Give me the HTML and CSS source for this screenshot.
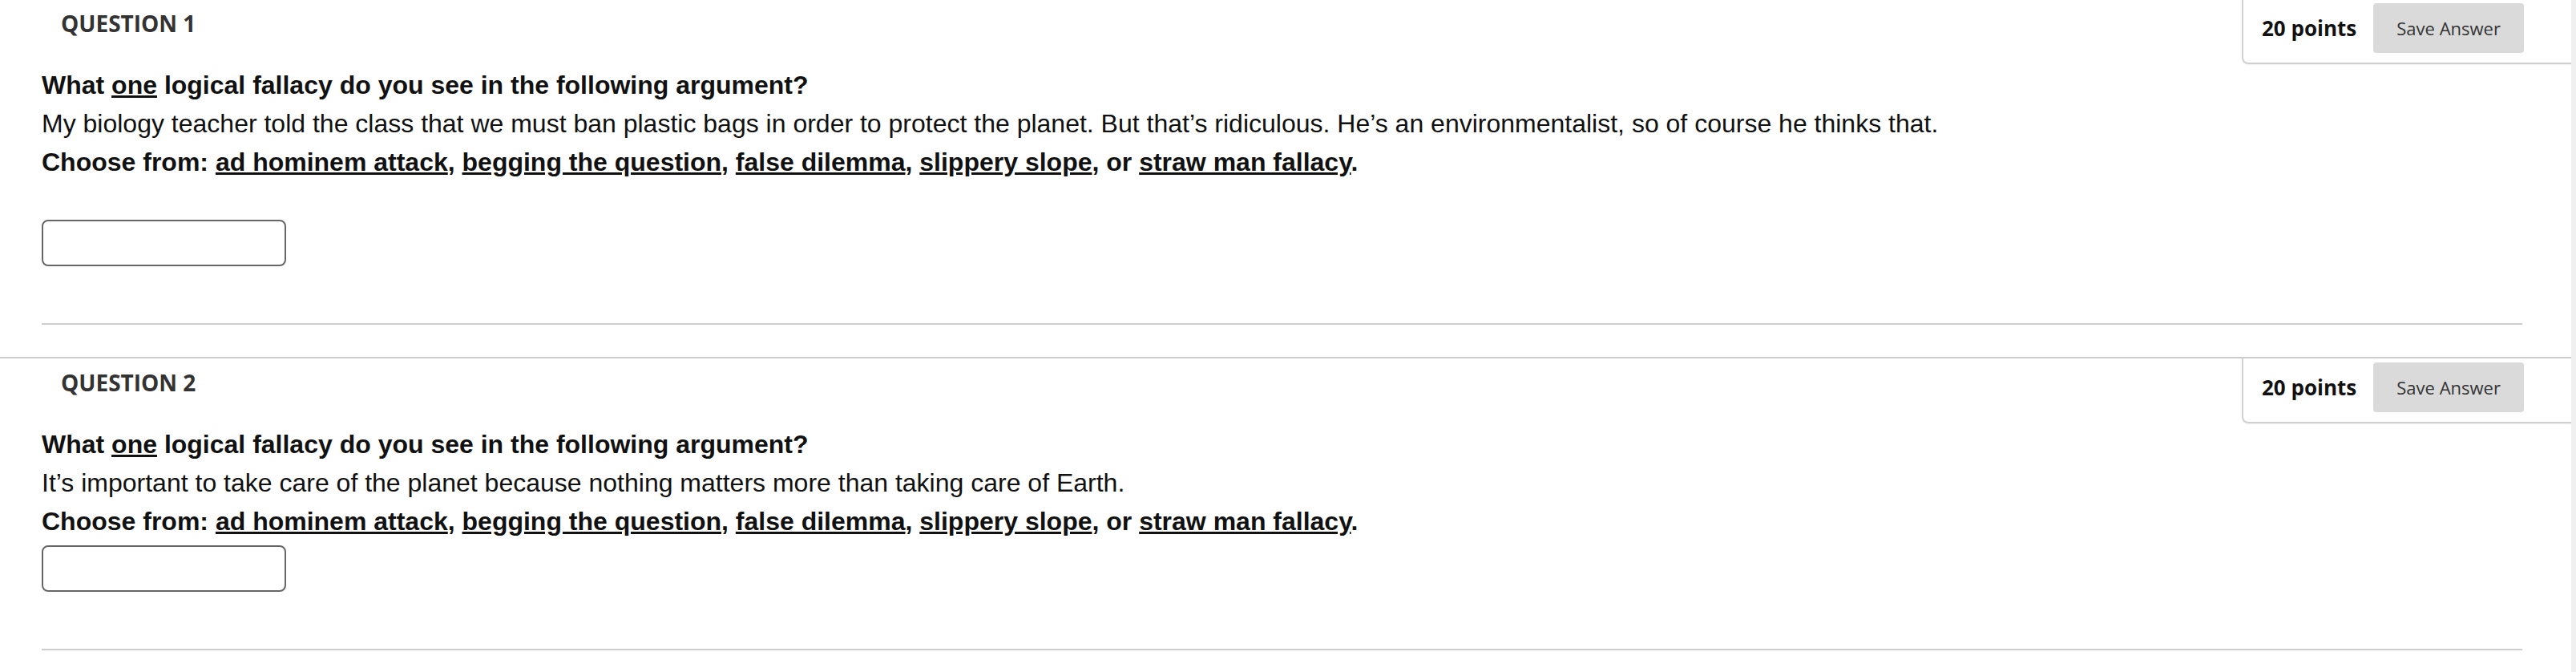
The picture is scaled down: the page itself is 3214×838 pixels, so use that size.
FILE: index.html
```html
<!DOCTYPE html>
<html lang="en">
<head>
  <meta charset="UTF-8">
  <title>Test</title>
  <link rel="stylesheet" href="styles.css">
</head>
<body>
  <div class="page">
    <div class="main">
      <!-- Question 1 -->
      <div class="question">
        <div class="q-head">
          <h3 class="q-label">QUESTION 1</h3>
          <div class="q-points">
            <span class="points">20 points</span>
            <button class="save-btn">Save Answer</button>
          </div>
        </div>
        <div class="q-body">
          <p class="prompt"><strong>What <u>one</u> logical fallacy do you see in the following argument?</strong></p>
          <p>My biology teacher told the class that we must ban plastic bags in order to protect the planet. But that’s ridiculous. He’s an environmentalist, so of course he thinks that.</p>
          <p class="choices"><strong>Choose from: <u>ad hominem attack</u>, <u>begging the question</u>, <u>false dilemma</u>, <u>slippery slope</u>, or <u>straw man fallacy</u>.</strong></p>
          <div class="spacer"></div>
          <input type="text" class="answer">
        </div>
        <hr class="q-end">
      </div>

      <!-- Question 2 -->
      <div class="question">
        <div class="q-head">
          <h3 class="q-label">QUESTION 2</h3>
          <div class="q-points">
            <span class="points">20 points</span>
            <button class="save-btn">Save Answer</button>
          </div>
        </div>
        <div class="q-body">
          <p class="prompt"><strong>What <u>one</u> logical fallacy do you see in the following argument?</strong></p>
          <p>It’s important to take care of the planet because nothing matters more than taking care of Earth.</p>
          <p class="choices"><strong>Choose from: <u>ad hominem attack</u>, <u>begging the question</u>, <u>false dilemma</u>, <u>slippery slope</u>, or <u>straw man fallacy</u>.</strong></p>
          <input type="text" class="answer">
        </div>
        <hr class="q-end">
      </div>
    </div>
    <div class="track"></div>
  </div>
</body>
</html>
```

FILE: styles.css
```css
body {
  margin: 0;
  background: #ffffff;
  font-family: "Liberation Sans", Arial, sans-serif;
  color: #111;
  overflow: hidden;
}

.page {
  display: flex;
  min-height: 100vh;
}

.main {
  flex: 1;
  margin-top: -3px;
}

.track {
  width: 6px;
  background: #f0f0f0;
}

.question {
  border-top: 2px solid #cccccc;
  margin-bottom: 40px;
}

/* Cabecera: etiqueta + puntos */
.q-head {
  display: flex;
  justify-content: space-between;
  align-items: flex-start;
}

.q-label {
  margin: 0;
  padding: 10px 0 0 76px;
  font-family: "Open Sans", sans-serif;
  font-size: 28px;
  line-height: 40px;
  font-weight: 700;
  color: #333;
}

.q-points {
  display: flex;
  align-items: center;
  gap: 21px;
  width: 326px;
  height: 62px;
  padding: 5px 60px 12px 23px;
  border-left: 2px solid #d0d0d0;
  border-bottom: 2px solid #d0d0d0;
  border-bottom-left-radius: 8px;
  box-shadow: 0 1px 2px rgba(0, 0, 0, 0.06);
}

.points {
  font-family: "Open Sans", sans-serif;
  font-size: 26px;
  font-weight: 700;
  color: #111;
  white-space: nowrap;
}

.save-btn {
  height: 62px;
  padding: 0 29px;
  border: none;
  border-radius: 4px;
  background: #dadada;
  font-family: "Open Sans", sans-serif;
  font-size: 22px;
  color: #333;
  white-space: nowrap;
}

/* Cuerpo de la pregunta */
.q-body {
  padding: 2px 52px 0;
}

.q-body p {
  margin: 0;
  font-size: 32px;
  line-height: 48px;
}

.spacer {
  height: 42px;
}

.answer {
  display: block;
  box-sizing: border-box;
  width: 305px;
  height: 58px;
  margin-top: 6px;
  border: 2px solid #666;
  border-radius: 8px;
  background: #fff;
}

.q-end {
  margin: 71px 61px 0 52px;
  border: none;
  height: 2px;
  background: #cdcdcd;
}
```
